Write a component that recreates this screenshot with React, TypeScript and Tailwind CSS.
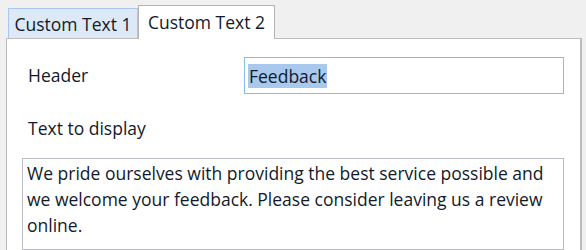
export default function App() {
  const font = { fontFamily: '"Open Sans", "Noto Sans", sans-serif' };
  return (
    <div
      className="w-[586px] h-[250px] bg-[#f0f0f0] overflow-hidden flex flex-col pt-[5px] text-[#121a2b]"
      style={font}
    >
      <div className="flex items-end pl-[8px] h-[33px] relative z-10">
        <div className="w-[130px] h-[30px] bg-[#dde9f7] border border-[#a9c7ea] border-b-0 flex items-center justify-center text-[17.5px] leading-none pt-[2px]">
          Custom Text 1
        </div>
        <div className="w-[137px] h-[34px] -mb-px bg-white border border-[#b4b4b4] border-b-0 flex items-center justify-center text-[17.5px] leading-none">
          Custom Text 2
        </div>
      </div>
      <div className="ml-[6px] w-[576px] flex-1 bg-white border-l border-t border-r-2 border-[#bcbcbc] flex flex-col">
        <div className="flex items-center mt-[18px] h-[37px]">
          <div className="pl-[21px] w-[237px] text-[17.5px]">Header</div>
          <div className="w-[320px] h-[37px] border border-[#86bdec] flex items-center pl-[3px]">
            <span className="bg-[#a8c8ee] text-[17.5px] leading-[24px] px-[1px]">Feedback</span>
          </div>
        </div>
        <div className="pl-[21px] mt-[22px] text-[17.5px] leading-[24px]">Text to display</div>
        <div className="ml-[15px] mt-[18px] w-[542px] flex-1 border border-[#bcbcc4] pl-[4px] pr-[2px] pt-[1px] text-[17.5px] leading-[26px]">
          We pride ourselves with providing the best service possible and we welcome your feedback. Please consider leaving us a review online.
        </div>
      </div>
    </div>
  );
}
